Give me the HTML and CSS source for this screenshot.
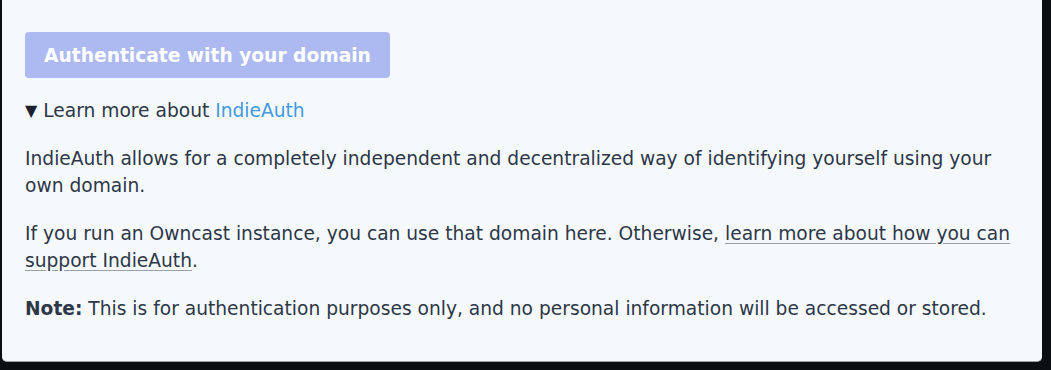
FILE: index.html
```html
<!DOCTYPE html>
<html>
<head>
<meta charset="utf-8">
<link rel="stylesheet" href="styles.css">
</head>
<body>
<div class="panel">
  <button class="auth-btn">Authenticate with your domain</button>
  <details open class="more">
    <summary><span class="tri">&#9660;</span> Learn more about <a class="blue" href="#">IndieAuth</a></summary>
    <p>IndieAuth allows for a completely independent and decentralized way of identifying yourself using your own domain.</p>
    <p>If you run an Owncast instance, you can use that domain here. Otherwise, <a class="ul" href="#">learn more about how you can support IndieAuth</a>.</p>
    <p><strong>Note:</strong> This is for authentication purposes only, and no personal information will be accessed or stored.</p>
  </details>
</div>
</body>
</html>
```
FILE: styles.css
```css
html, body {
  margin: 0;
  padding: 0;
  background: #0b0f14;
  height: 100%;
  overflow: hidden;
}
.panel {
  box-sizing: border-box;
  margin-left: 2px;
  width: 1040px;
  height: 362px;
  background: #f5f9fc;
  border-radius: 0 0 5px 5px;
  border-bottom: 1px solid #9aa0a6;
  padding: 32px 23px 0 23px;
  font-family: "DejaVu Sans", sans-serif;
  font-size: 18.65px;
  color: #2d3748;
}
.auth-btn {
  display: block;
  height: 46px;
  width: 365px;
  border: none;
  border-radius: 4px;
  background: #adbaf2;
  color: #fff;
  font-family: "DejaVu Sans", sans-serif;
  font-weight: bold;
  font-size: 18.65px;
  padding: 0;
}
.more summary {
  list-style: none;
  margin-top: 19px;
  line-height: 27px;
}
.more summary::-webkit-details-marker { display: none; }
.tri {
  font-size: 16px;
  color: #1a202c;
  vertical-align: 1px;
}
.blue {
  color: #4299e1;
  text-decoration: none;
}
.more p {
  margin: 21px 0 0 0;
  line-height: 27px;
}
.ul {
  color: #2d3748;
  text-decoration: underline;
  text-decoration-color: #98a1ad;
  text-underline-offset: 3px;
}
strong { font-weight: bold; }
```
